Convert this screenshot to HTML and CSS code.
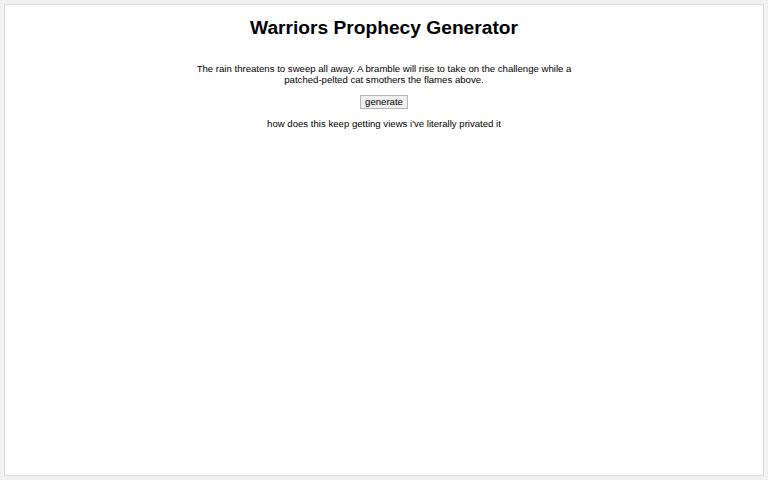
FILE: index.html
```html
<!DOCTYPE html>
<html>
<head>
<meta charset="utf-8">
<link rel="stylesheet" href="styles.css">
</head>
<body>
<div class="page">
  <h1 class="title">Warriors Prophecy Generator</h1>
  <p class="prophecy">The rain threatens to sweep all away. A bramble will rise to take on the challenge while a patched-pelted cat smothers the flames above.</p>
  <button class="generate">generate</button>
  <p class="note">how does this keep getting views i've literally privated it</p>
</div>
</body>
</html>
```
FILE: styles.css
```css
html, body {
  margin: 0;
  background: #f1f1f1;
}
body {
  padding: 4px;
  font-family: "Liberation Sans", Arial, sans-serif;
  color: #000;
}
.page {
  box-sizing: border-box;
  height: 472px;
  background: #fff;
  border: 1px solid #dcdcdc;
  display: flex;
  flex-direction: column;
  align-items: center;
  text-align: center;
}
.title {
  margin: 12px 0 0;
  font-size: 19.2px;
  line-height: 22px;
  font-weight: bold;
}
.prophecy {
  margin: 24px 0 0;
  width: 384px;
  font-size: 9.6px;
  line-height: 11px;
}
.generate {
  margin-top: 10px;
  font-family: "Liberation Sans", Arial, sans-serif;
  font-size: 9.6px;
  line-height: 10px;
  height: 14px;
  padding: 1px 4px;
  background: #efefef;
  border: 1px solid #b8b8b8;
  border-radius: 0;
  color: #000;
}
.note {
  margin: 9px 0 0;
  font-size: 9.6px;
  line-height: 11px;
}
```
